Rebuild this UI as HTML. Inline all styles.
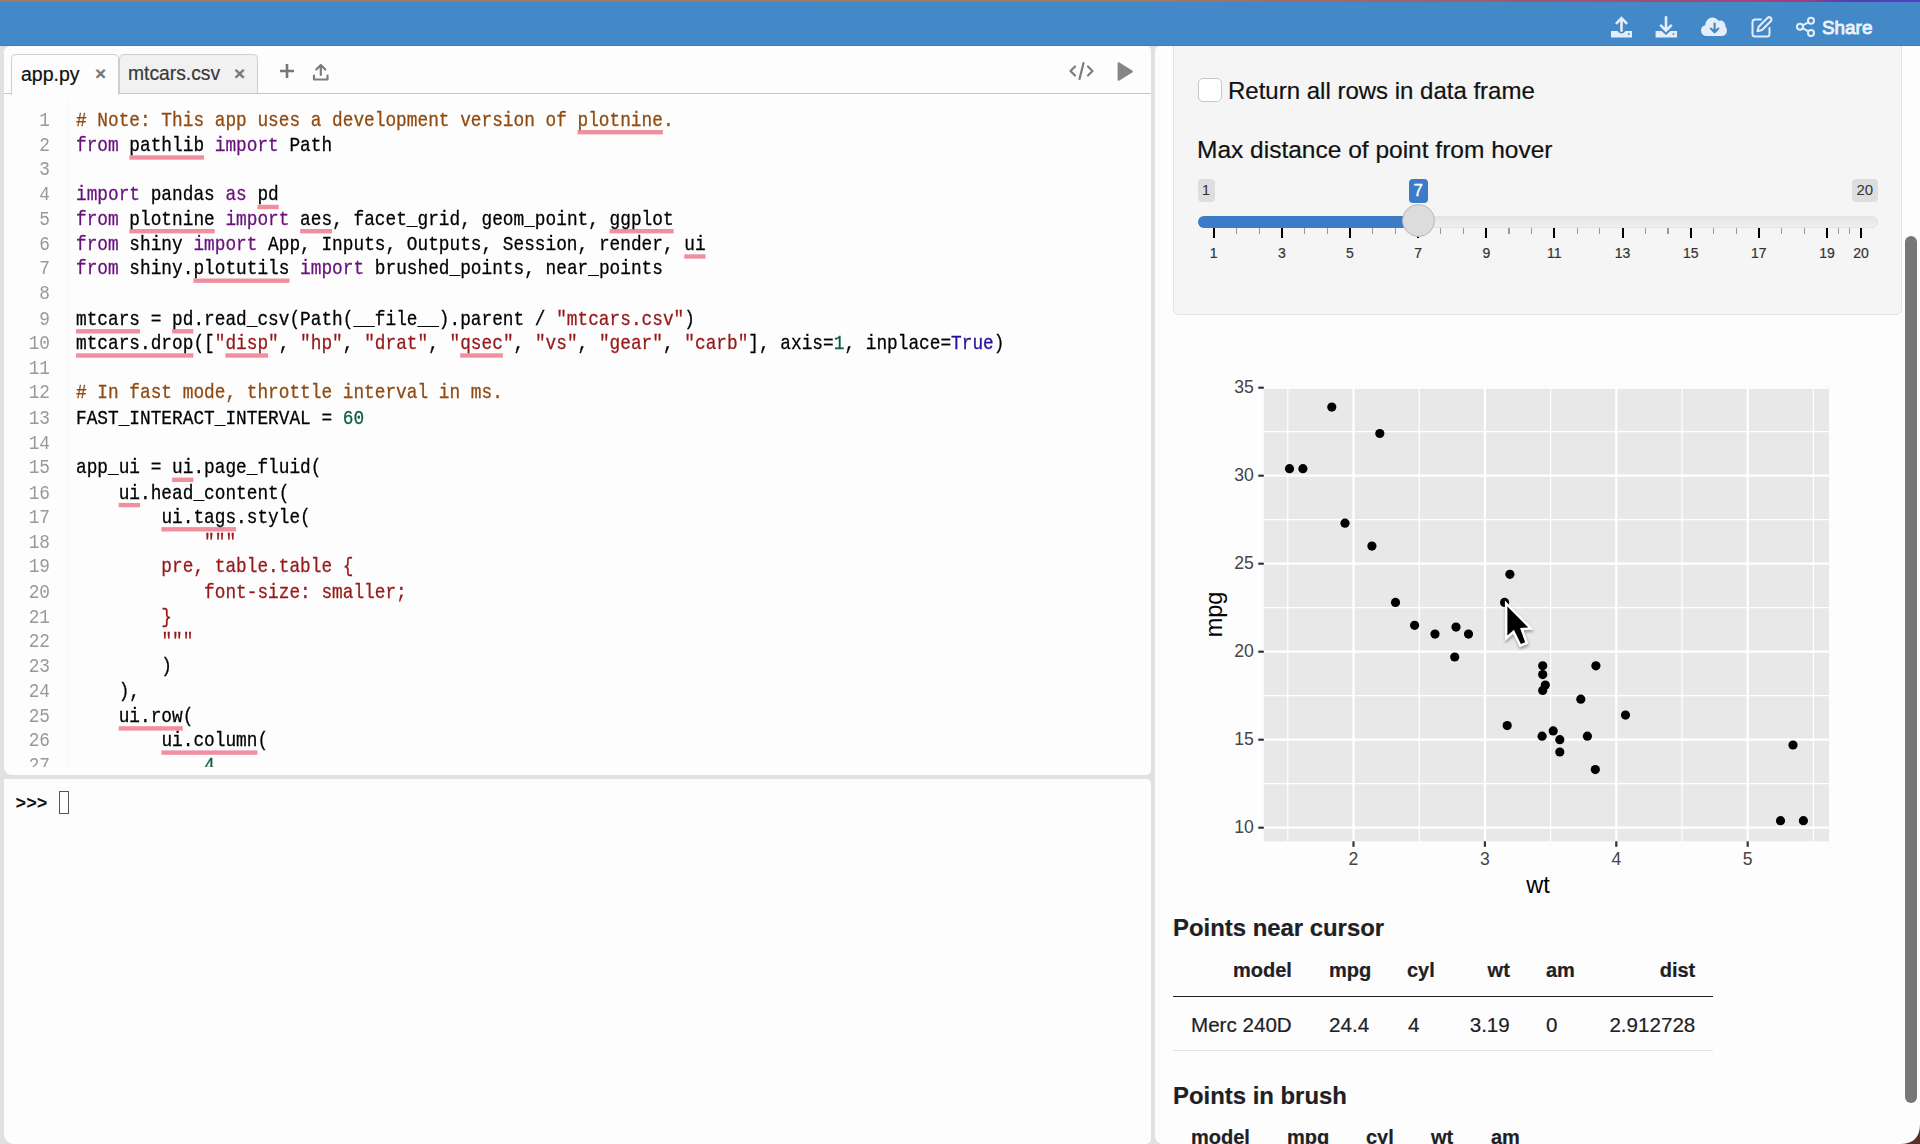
<!DOCTYPE html>
<html><head><meta charset="utf-8">
<style>
*{box-sizing:border-box}
html,body{margin:0;padding:0}
body{width:1920px;height:1144px;overflow:hidden;position:relative;background:#e1e1e1;font-family:"Liberation Sans",sans-serif;color:#212529}
.abs{position:absolute}
.tabtxt,.h4,.th,.td,.tkL,.wl{-webkit-text-stroke:0.2px currentColor}
#topline{position:absolute;left:0;top:0;width:1920px;height:2px;background:linear-gradient(90deg,#9c7a6a 0%,#a07868 60%,#a05070 85%,#a04080 94%,#5040b0 96%,#5040c0 100%)}
#header{position:absolute;left:0;top:2px;width:1920px;height:44px;background:#4388c7;border-bottom:1px solid #3f7db5}
#editor{position:absolute;left:4px;top:46px;width:1147px;height:729px;background:#fdfdfd;border-radius:6px 5px 5px 8px;overflow:hidden}
#terminal{position:absolute;left:4px;top:779px;width:1147px;height:365px;background:#fdfdfd;border-radius:0 5px 5px 10px}
#divider{position:absolute;left:1151px;top:46px;width:4px;height:1098px;background:#e1e1e1}
#right{position:absolute;left:1155px;top:46px;width:765px;height:1098px;background:#fdfdfd;overflow:hidden;border-radius:5px 0 0 8px}
.tab{position:absolute;top:8px;height:40px;border:1px solid #cfcfcf;border-bottom:none;border-radius:5px 5px 0 0}
.tabline{position:absolute;left:0;top:46.5px;width:1147px;height:1px;background:#c6c6c6}
.tabtxt{position:absolute;font-size:19.5px;white-space:pre}
.cl{height:22.582px;line-height:22.582px;white-space:pre}
#gutter{position:absolute;left:0;top:61.8px;transform:scaleY(1.1);transform-origin:0 0;width:46px;text-align:right;font-family:"Liberation Mono",monospace;font-size:17.8px;color:#999}
#code{position:absolute;left:72px;top:62.3px;transform:scaleY(1.1);transform-origin:0 0;font-family:"Liberation Mono",monospace;font-size:17.8px;color:#000;-webkit-text-stroke:0.25px currentColor}
#gline{position:absolute;left:63px;top:55px;width:1px;height:666px;background:#f5f5f5}
#codeclip{position:absolute;left:0;top:0;width:1147px;height:721px;overflow:hidden}
#well{position:absolute;left:18px;top:-10px;width:729px;height:279px;background:#f5f5f5;border:1px solid #e3e3e3;border-radius:6px}
.tkM{position:absolute;top:182px;width:2px;height:10px;background:#000}
.tkm{position:absolute;top:182px;width:1.2px;height:5.5px;background:#999}
.tkL{position:absolute;top:199px;width:40px;text-align:center;font-size:14px;color:#333}
svg text.tk{font-family:"Liberation Sans",sans-serif;font-size:17.6px;fill:#454545}
svg text.al{font-family:"Liberation Sans",sans-serif;font-size:23.5px;fill:#000}
.h4{position:absolute;font-weight:bold;font-size:23.9px;color:#1d2125;white-space:pre;margin-top:2.6px}
.th{position:absolute;font-weight:bold;font-size:20px;color:#1d2125;white-space:pre;margin-top:0.7px}
.td{position:absolute;font-size:20.6px;color:#1d2125;white-space:pre;margin-top:0.5px}
</style></head>
<body>
<div id="topline"></div>
<div id="header">
  <svg class="abs" style="left:0;top:-2px" width="1920" height="46" viewBox="0 0 1920 46">
    <g fill="#e3eefa" stroke="none">
      <!-- upload -->
      <path d="M1621.5 16.2 L1628 23 L1626.2 24.7 L1622.8 21.2 L1622.8 31 Q1621.5 33 1620.2 31 L1620.2 21.2 L1616.8 24.7 L1615 23 Z"/>
      <path d="M1611 31 L1617.5 31 Q1621.5 36 1625.5 31 L1632 31 L1632 37.5 L1611 37.5 Z"/>
      <!-- download -->
      <path d="M1664.7 16.2 L1667.3 16.2 L1667.3 27.5 L1670.8 24 L1672.7 25.8 L1666 32.5 L1659.3 25.8 L1661.2 24 L1664.7 27.5 Z"/>
      <path d="M1655.6 31 L1661.5 31 L1666 35 L1670.5 31 L1677 31 L1677 37.5 L1655.6 37.5 Z"/>
      <!-- cloud -->
      <circle cx="1706.5" cy="30.5" r="5.5"/><circle cx="1712.5" cy="24.8" r="7.2"/><circle cx="1720.3" cy="25.5" r="5.1"/><circle cx="1721.5" cy="30.5" r="5.5"/><rect x="1706.5" y="27" width="15" height="9"/>
    </g>
    <g fill="#4388c7"><circle cx="1628.8" cy="34" r="0.9"/><circle cx="1673.5" cy="34" r="0.9"/></g>
    <path d="M1714.6 23.5 L1714.6 32 M1710.9 28.6 L1714.6 32.3 L1718.3 28.6" stroke="#4a83b8" stroke-width="2.1" fill="none" stroke-linecap="round" stroke-linejoin="round"/>
    <g fill="none" stroke="#e3eefa" stroke-width="2" stroke-linecap="round" stroke-linejoin="round">
      <path d="M1761 19.5 L1755 19.5 Q1752.5 19.5 1752.5 22 L1752.5 34 Q1752.5 36.5 1755 36.5 L1767 36.5 Q1769.5 36.5 1769.5 34 L1769.5 28"/>
      <path d="M1770.5 17.5 Q1772.5 19.5 1770.5 21.5 L1762 30 L1757.5 31.2 L1758.7 26.7 L1767.2 18.2 Q1769 16.5 1770.5 17.5 Z"/>
      <circle cx="1800" cy="26.8" r="3"/><circle cx="1811" cy="20.8" r="3"/><circle cx="1811" cy="32.9" r="3"/>
      <path d="M1802.7 25.4 L1808.3 22.3 M1802.7 28.2 L1808.3 31.4"/>
    </g>
    <text x="1822" y="34" font-family="Liberation Sans" font-size="18.9" fill="#e8f3fd" stroke="#e8f3fd" stroke-width="0.9">Share</text>
  </svg>
</div>

<div id="editor">
  <div class="tab" style="left:7px;width:108px;background:#fdfdfd;height:41px;z-index:2"></div>
  <div class="tab" style="left:114.5px;width:139.5px;background:#f1f1f1"></div>
  <div class="tabline"></div>
  <div class="tabtxt" style="left:17px;top:16.5px;color:#111;z-index:3">app.py</div>
  <div class="tabtxt" style="left:91px;top:17px;color:#777;font-size:19px;font-weight:bold;z-index:3">×</div>
  <div class="tabtxt" style="left:124px;top:16.5px;color:#383838;font-size:19.3px">mtcars.csv</div>
  <div class="tabtxt" style="left:230px;top:17px;color:#777;font-size:19px;font-weight:bold">×</div>
  <svg class="abs" style="left:0;top:0" width="1147" height="46">
    <g stroke="#777" stroke-width="2.6" fill="none" stroke-linecap="butt">
      <path d="M283 32 L283 18 M276 25 L290 25"/>
    </g>
    <g stroke="#7d7d7d" stroke-width="2.2" fill="none" stroke-linecap="round" stroke-linejoin="round">
      <path d="M310 29.5 L310 33.5 L323.5 33.5 L323.5 29.5 M316.8 29 L316.8 19.5 M312.3 23.5 L316.8 19 L321.3 23.5"/>
      <path d="M1071 25 L1066.5 20.5 L1071 16 M1084 25 L1088.5 20.5 L1084 16 M1079.5 12.5 L1075.5 28.5" transform="translate(0,4.5)"/>
    </g>
    <path d="M1114.8 17.4 L1127.6 25.5 L1114.8 33.6 Z" fill="#858585" stroke="#858585" stroke-width="2.4" stroke-linejoin="round"/>
  </svg>
  <div id="codeclip"><div id="gline"></div>
    <div id="gutter"><div class='cl'>1</div>
<div class='cl'>2</div>
<div class='cl'>3</div>
<div class='cl'>4</div>
<div class='cl'>5</div>
<div class='cl'>6</div>
<div class='cl'>7</div>
<div class='cl'>8</div>
<div class='cl'>9</div>
<div class='cl'>10</div>
<div class='cl'>11</div>
<div class='cl'>12</div>
<div class='cl'>13</div>
<div class='cl'>14</div>
<div class='cl'>15</div>
<div class='cl'>16</div>
<div class='cl'>17</div>
<div class='cl'>18</div>
<div class='cl'>19</div>
<div class='cl'>20</div>
<div class='cl'>21</div>
<div class='cl'>22</div>
<div class='cl'>23</div>
<div class='cl'>24</div>
<div class='cl'>25</div>
<div class='cl'>26</div>
<div class='cl'>27</div></div>
    <div id="code"><div class='cl'><span style='color:#904a10'># Note: This app uses a development version of </span><span style='color:#904a10;text-decoration:underline;text-decoration-color:#f0909f;text-decoration-thickness:3.6px;text-underline-offset:3.6px;text-decoration-skip-ink:none'>plotnine</span><span style='color:#904a10'>.</span></div>
<div class='cl'><span style='color:#68107c'>from</span> <span style='text-decoration:underline;text-decoration-color:#f0909f;text-decoration-thickness:3.6px;text-underline-offset:3.6px;text-decoration-skip-ink:none'>pathlib</span> <span style='color:#68107c'>import</span> Path</div>
<div class='cl'>&#8203;</div>
<div class='cl'><span style='color:#68107c'>import</span> pandas <span style='color:#68107c'>as</span> <span style='text-decoration:underline;text-decoration-color:#f0909f;text-decoration-thickness:3.6px;text-underline-offset:3.6px;text-decoration-skip-ink:none'>pd</span></div>
<div class='cl'><span style='color:#68107c'>from</span> <span style='text-decoration:underline;text-decoration-color:#f0909f;text-decoration-thickness:3.6px;text-underline-offset:3.6px;text-decoration-skip-ink:none'>plotnine</span> <span style='color:#68107c'>import</span> <span style='text-decoration:underline;text-decoration-color:#f0909f;text-decoration-thickness:3.6px;text-underline-offset:3.6px;text-decoration-skip-ink:none'>aes</span>, facet_grid, geom_point, <span style='text-decoration:underline;text-decoration-color:#f0909f;text-decoration-thickness:3.6px;text-underline-offset:3.6px;text-decoration-skip-ink:none'>ggplot</span></div>
<div class='cl'><span style='color:#68107c'>from</span> shiny <span style='color:#68107c'>import</span> App, Inputs, Outputs, Session, render, <span style='text-decoration:underline;text-decoration-color:#f0909f;text-decoration-thickness:3.6px;text-underline-offset:3.6px;text-decoration-skip-ink:none'>ui</span></div>
<div class='cl'><span style='color:#68107c'>from</span> shiny.<span style='text-decoration:underline;text-decoration-color:#f0909f;text-decoration-thickness:3.6px;text-underline-offset:3.6px;text-decoration-skip-ink:none'>plotutils</span> <span style='color:#68107c'>import</span> brushed_points, near_points</div>
<div class='cl'>&#8203;</div>
<div class='cl'><span style='text-decoration:underline;text-decoration-color:#f0909f;text-decoration-thickness:3.6px;text-underline-offset:3.6px;text-decoration-skip-ink:none'>mtcars</span> = <span style='text-decoration:underline;text-decoration-color:#f0909f;text-decoration-thickness:3.6px;text-underline-offset:3.6px;text-decoration-skip-ink:none'>pd</span>.read_csv(Path(__file__).parent / <span style='color:#961818'>&quot;mtcars.csv&quot;</span>)</div>
<div class='cl'><span style='text-decoration:underline;text-decoration-color:#f0909f;text-decoration-thickness:3.6px;text-underline-offset:3.6px;text-decoration-skip-ink:none'>mtcars.drop</span>([<span style='color:#961818'>&quot;</span><span style='color:#961818;text-decoration:underline;text-decoration-color:#f0909f;text-decoration-thickness:3.6px;text-underline-offset:3.6px;text-decoration-skip-ink:none'>disp</span><span style='color:#961818'>&quot;</span>, <span style='color:#961818'>&quot;hp&quot;</span>, <span style='color:#961818'>&quot;drat&quot;</span>, <span style='color:#961818'>&quot;</span><span style='color:#961818;text-decoration:underline;text-decoration-color:#f0909f;text-decoration-thickness:3.6px;text-underline-offset:3.6px;text-decoration-skip-ink:none'>qsec</span><span style='color:#961818'>&quot;</span>, <span style='color:#961818'>&quot;vs&quot;</span>, <span style='color:#961818'>&quot;gear&quot;</span>, <span style='color:#961818'>&quot;carb&quot;</span>], axis=<span style='color:#0f5e3c'>1</span>, inplace=<span style='color:#221199'>True</span>)</div>
<div class='cl'>&#8203;</div>
<div class='cl'><span style='color:#904a10'># In fast mode, throttle interval in ms.</span></div>
<div class='cl'>FAST_INTERACT_INTERVAL = <span style='color:#0f5e3c'>60</span></div>
<div class='cl'>&#8203;</div>
<div class='cl'>app_ui = <span style='text-decoration:underline;text-decoration-color:#f0909f;text-decoration-thickness:3.6px;text-underline-offset:3.6px;text-decoration-skip-ink:none'>ui</span>.page_fluid(</div>
<div class='cl'>    <span style='text-decoration:underline;text-decoration-color:#f0909f;text-decoration-thickness:3.6px;text-underline-offset:3.6px;text-decoration-skip-ink:none'>ui</span>.head_content(</div>
<div class='cl'>        <span style='text-decoration:underline;text-decoration-color:#f0909f;text-decoration-thickness:3.6px;text-underline-offset:3.6px;text-decoration-skip-ink:none'>ui.tags</span>.style(</div>
<div class='cl'>            <span style='color:#961818'>&quot;&quot;&quot;</span></div>
<div class='cl'><span style='color:#961818'>        pre, table.table {</span></div>
<div class='cl'><span style='color:#961818'>            font-size: smaller;</span></div>
<div class='cl'><span style='color:#961818'>        }</span></div>
<div class='cl'>        <span style='color:#961818'>&quot;&quot;&quot;</span></div>
<div class='cl'>        )</div>
<div class='cl'>    ),</div>
<div class='cl'>    <span style='text-decoration:underline;text-decoration-color:#f0909f;text-decoration-thickness:3.6px;text-underline-offset:3.6px;text-decoration-skip-ink:none'>ui.row</span>(</div>
<div class='cl'>        <span style='text-decoration:underline;text-decoration-color:#f0909f;text-decoration-thickness:3.6px;text-underline-offset:3.6px;text-decoration-skip-ink:none'>ui.column</span>(</div>
<div class='cl'>            <span style='color:#0f5e3c'>4</span>,</div></div>
  </div>
</div>

<div id="terminal">
  <div class="abs" style="left:11.5px;top:13px;font-family:'Liberation Mono',monospace;font-size:17.8px;line-height:24.84px;color:#111;font-weight:bold">&gt;&gt;&gt;</div>
  <div class="abs" style="left:55px;top:12px;width:10px;height:23px;border:1.5px solid #555;background:#fff"></div>
</div>

<div id="divider"></div>

<div id="right">
  <div id="well"></div>
</div>
<div class="abs" style="left:1197.5px;top:78px;width:24px;height:23.5px;border:1px solid #c8c8c8;border-radius:5px;background:#fff"></div>
<div class="abs wl" style="left:1228px;top:77px;font-size:24px;color:#111;white-space:pre">Return all rows in data frame</div>
<div class="abs wl" style="left:1197px;top:136px;font-size:24.5px;color:#111;white-space:pre">Max distance of point from hover</div>

<svg class="abs" style="left:0;top:0;pointer-events:none" width="1920" height="1144">
<rect x='1263.8' y='386.4' width='565.3' height='455.0' fill='#e8e8e8'/>
<line x1='1287.8' x2='1287.8' y1='386.4' y2='841.3' stroke='#fff' stroke-width='1.2'/>
<line x1='1419.2' x2='1419.2' y1='386.4' y2='841.3' stroke='#fff' stroke-width='1.2'/>
<line x1='1550.6' x2='1550.6' y1='386.4' y2='841.3' stroke='#fff' stroke-width='1.2'/>
<line x1='1682.0' x2='1682.0' y1='386.4' y2='841.3' stroke='#fff' stroke-width='1.2'/>
<line x1='1813.4' x2='1813.4' y1='386.4' y2='841.3' stroke='#fff' stroke-width='1.2'/>
<line y1='783.7' y2='783.7' x1='1263.8' x2='1829.1' stroke='#fff' stroke-width='1.2'/>
<line y1='695.7' y2='695.7' x1='1263.8' x2='1829.1' stroke='#fff' stroke-width='1.2'/>
<line y1='607.7' y2='607.7' x1='1263.8' x2='1829.1' stroke='#fff' stroke-width='1.2'/>
<line y1='519.7' y2='519.7' x1='1263.8' x2='1829.1' stroke='#fff' stroke-width='1.2'/>
<line y1='431.7' y2='431.7' x1='1263.8' x2='1829.1' stroke='#fff' stroke-width='1.2'/>
<line x1='1353.5' x2='1353.5' y1='386.4' y2='841.3' stroke='#fff' stroke-width='2.2'/>
<line x1='1484.9' x2='1484.9' y1='386.4' y2='841.3' stroke='#fff' stroke-width='2.2'/>
<line x1='1616.3' x2='1616.3' y1='386.4' y2='841.3' stroke='#fff' stroke-width='2.2'/>
<line x1='1747.7' x2='1747.7' y1='386.4' y2='841.3' stroke='#fff' stroke-width='2.2'/>
<line y1='827.7' y2='827.7' x1='1263.8' x2='1829.1' stroke='#fff' stroke-width='2.2'/>
<line y1='739.7' y2='739.7' x1='1263.8' x2='1829.1' stroke='#fff' stroke-width='2.2'/>
<line y1='651.7' y2='651.7' x1='1263.8' x2='1829.1' stroke='#fff' stroke-width='2.2'/>
<line y1='563.7' y2='563.7' x1='1263.8' x2='1829.1' stroke='#fff' stroke-width='2.2'/>
<line y1='475.7' y2='475.7' x1='1263.8' x2='1829.1' stroke='#fff' stroke-width='2.2'/>
<line y1='387.7' y2='387.7' x1='1263.8' x2='1829.1' stroke='#fff' stroke-width='2.2'/>
<line x1='1258.3' x2='1263.8' y1='827.7' y2='827.7' stroke='#333' stroke-width='2.2'/>
<text x='1253.8' y='833.1' text-anchor='end' class='tk'>10</text>
<line x1='1258.3' x2='1263.8' y1='739.7' y2='739.7' stroke='#333' stroke-width='2.2'/>
<text x='1253.8' y='745.1' text-anchor='end' class='tk'>15</text>
<line x1='1258.3' x2='1263.8' y1='651.7' y2='651.7' stroke='#333' stroke-width='2.2'/>
<text x='1253.8' y='657.1' text-anchor='end' class='tk'>20</text>
<line x1='1258.3' x2='1263.8' y1='563.7' y2='563.7' stroke='#333' stroke-width='2.2'/>
<text x='1253.8' y='569.1' text-anchor='end' class='tk'>25</text>
<line x1='1258.3' x2='1263.8' y1='475.7' y2='475.7' stroke='#333' stroke-width='2.2'/>
<text x='1253.8' y='481.1' text-anchor='end' class='tk'>30</text>
<line x1='1258.3' x2='1263.8' y1='387.7' y2='387.7' stroke='#333' stroke-width='2.2'/>
<text x='1253.8' y='393.1' text-anchor='end' class='tk'>35</text>
<line x1='1353.5' x2='1353.5' y1='841.3' y2='846.8' stroke='#333' stroke-width='2.2'/>
<text x='1353.5' y='864.8' text-anchor='middle' class='tk'>2</text>
<line x1='1484.9' x2='1484.9' y1='841.3' y2='846.8' stroke='#333' stroke-width='2.2'/>
<text x='1484.9' y='864.8' text-anchor='middle' class='tk'>3</text>
<line x1='1616.3' x2='1616.3' y1='841.3' y2='846.8' stroke='#333' stroke-width='2.2'/>
<text x='1616.3' y='864.8' text-anchor='middle' class='tk'>4</text>
<line x1='1747.7' x2='1747.7' y1='841.3' y2='846.8' stroke='#333' stroke-width='2.2'/>
<text x='1747.7' y='864.8' text-anchor='middle' class='tk'>5</text>
<text x='1538' y='893' text-anchor='middle' class='al'>wt</text>
<text transform='translate(1222,614.5) rotate(-90)' text-anchor='middle' class='al'>mpg</text>
<circle cx='1435.0' cy='634.1' r='4.6' fill='#000'/>
<circle cx='1468.5' cy='634.1' r='4.6' fill='#000'/>
<circle cx='1395.5' cy='602.4' r='4.6' fill='#000'/>
<circle cx='1513.2' cy='627.1' r='4.6' fill='#000'/>
<circle cx='1542.7' cy='674.6' r='4.6' fill='#000'/>
<circle cx='1545.3' cy='685.1' r='4.6' fill='#000'/>
<circle cx='1559.8' cy='752.0' r='4.6' fill='#000'/>
<circle cx='1509.9' cy='574.3' r='4.6' fill='#000'/>
<circle cx='1504.6' cy='602.4' r='4.6' fill='#000'/>
<circle cx='1542.7' cy='665.8' r='4.6' fill='#000'/>
<circle cx='1542.7' cy='690.4' r='4.6' fill='#000'/>
<circle cx='1625.5' cy='715.1' r='4.6' fill='#000'/>
<circle cx='1580.8' cy='699.2' r='4.6' fill='#000'/>
<circle cx='1587.4' cy='736.2' r='4.6' fill='#000'/>
<circle cx='1780.5' cy='820.7' r='4.6' fill='#000'/>
<circle cx='1803.4' cy='820.7' r='4.6' fill='#000'/>
<circle cx='1793.0' cy='745.0' r='4.6' fill='#000'/>
<circle cx='1379.8' cy='433.5' r='4.6' fill='#000'/>
<circle cx='1302.9' cy='468.7' r='4.6' fill='#000'/>
<circle cx='1331.8' cy='407.1' r='4.6' fill='#000'/>
<circle cx='1414.6' cy='625.3' r='4.6' fill='#000'/>
<circle cx='1553.2' cy='730.9' r='4.6' fill='#000'/>
<circle cx='1542.1' cy='736.2' r='4.6' fill='#000'/>
<circle cx='1595.3' cy='769.6' r='4.6' fill='#000'/>
<circle cx='1595.9' cy='665.8' r='4.6' fill='#000'/>
<circle cx='1345.0' cy='523.2' r='4.6' fill='#000'/>
<circle cx='1371.9' cy='546.1' r='4.6' fill='#000'/>
<circle cx='1289.5' cy='468.7' r='4.6' fill='#000'/>
<circle cx='1507.2' cy='725.6' r='4.6' fill='#000'/>
<circle cx='1454.7' cy='657.0' r='4.6' fill='#000'/>
<circle cx='1559.8' cy='739.7' r='4.6' fill='#000'/>
<circle cx='1456.0' cy='627.1' r='4.6' fill='#000'/>
</svg>

<!-- slider (page coords) -->
<div class="abs" style="left:0;top:46px;width:1920px;height:300px">
  <div class="abs" style="left:1198px;top:169.5px;width:679.5px;height:12.5px;border-radius:7px;background:linear-gradient(#e4e4e4,#f0f0f0);border:1px solid #e2e2e2"></div>
  <div class="abs" style="left:1198px;top:169.5px;width:222px;height:12.5px;border-radius:7px 0 0 7px;background:#3b7bc8"></div>
  <div class="abs" style="left:1401.5px;top:158px;width:33px;height:33px;border-radius:50%;background:#dcdcdc;border:1px solid #b8b8b8;z-index:5"></div>
  <div class="abs" style="left:1197.5px;top:133px;width:17px;height:22.5px;border-radius:4px;background:#dedede;color:#333;font-size:15px;text-align:center;line-height:22.5px">1</div>
  <div class="abs" style="left:1409px;top:133px;width:18.5px;height:24px;border-radius:4px;background:#3b7bc8;color:#fff;font-size:17px;text-align:center;line-height:24px;-webkit-text-stroke:0.3px #fff">7</div>
  <div class="abs" style="left:1852px;top:133px;width:25.5px;height:22.5px;border-radius:4px;background:#dedede;color:#333;font-size:15px;text-align:center;line-height:22.5px">20</div>
  <div class="abs" style="left:0;top:0">
<div class='tkM' style='left:1212.7px'></div>
<div class='tkL' style='left:1193.7px'>1</div>
<div class='tkM' style='left:1280.8px'></div>
<div class='tkL' style='left:1261.8px'>3</div>
<div class='tkM' style='left:1349.0px'></div>
<div class='tkL' style='left:1330.0px'>5</div>
<div class='tkM' style='left:1417.1px'></div>
<div class='tkL' style='left:1398.1px'>7</div>
<div class='tkM' style='left:1485.3px'></div>
<div class='tkL' style='left:1466.3px'>9</div>
<div class='tkM' style='left:1553.4px'></div>
<div class='tkL' style='left:1534.4px'>11</div>
<div class='tkM' style='left:1621.5px'></div>
<div class='tkL' style='left:1602.5px'>13</div>
<div class='tkM' style='left:1689.7px'></div>
<div class='tkL' style='left:1670.7px'>15</div>
<div class='tkM' style='left:1757.8px'></div>
<div class='tkL' style='left:1738.8px'>17</div>
<div class='tkM' style='left:1826.0px'></div>
<div class='tkL' style='left:1807.0px'>19</div>
<div class='tkM' style='left:1860.0px'></div>
<div class='tkL' style='left:1841.0px'>20</div>
<div class='tkm' style='left:1235.8px'></div>
<div class='tkm' style='left:1258.5px'></div>
<div class='tkm' style='left:1304.0px'></div>
<div class='tkm' style='left:1326.7px'></div>
<div class='tkm' style='left:1372.1px'></div>
<div class='tkm' style='left:1394.8px'></div>
<div class='tkm' style='left:1440.2px'></div>
<div class='tkm' style='left:1462.9px'></div>
<div class='tkm' style='left:1508.4px'></div>
<div class='tkm' style='left:1531.1px'></div>
<div class='tkm' style='left:1576.5px'></div>
<div class='tkm' style='left:1599.2px'></div>
<div class='tkm' style='left:1644.7px'></div>
<div class='tkm' style='left:1667.4px'></div>
<div class='tkm' style='left:1712.8px'></div>
<div class='tkm' style='left:1735.5px'></div>
<div class='tkm' style='left:1780.9px'></div>
<div class='tkm' style='left:1803.6px'></div>
<div class='tkm' style='left:1837.7px'></div>
<div class='tkm' style='left:1849.1px'></div>
  </div>
</div>

<!-- tables -->
<div class="h4" style="left:1173px;top:911px">Points near cursor</div>
<div class="th" style="left:1233px;top:958px">model</div>
<div class="th" style="left:1329px;top:958px">mpg</div>
<div class="th" style="left:1407px;top:958px">cyl</div>
<div class="th" style="left:1487.6px;top:958px">wt</div>
<div class="th" style="left:1546px;top:958px">am</div>
<div class="th" style="left:1659.7px;top:958px">dist</div>
<div class="abs" style="left:1173px;top:995.5px;width:540px;height:1px;background:#222"></div>
<div class="td" style="left:1191px;top:1012px">Merc 240D</div>
<div class="td" style="left:1329px;top:1012px">24.4</div>
<div class="td" style="left:1408px;top:1012px">4</div>
<div class="td" style="left:1469.7px;top:1012px">3.19</div>
<div class="td" style="left:1546px;top:1012px">0</div>
<div class="td" style="left:1609.4px;top:1012px">2.912728</div>
<div class="abs" style="left:1173px;top:1049.5px;width:540px;height:1px;background:#e2e2e2"></div>
<div class="h4" style="left:1173px;top:1079px">Points in brush</div>
<div class="th" style="left:1191px;top:1125px">model</div>
<div class="th" style="left:1287px;top:1125px">mpg</div>
<div class="th" style="left:1366px;top:1125px">cyl</div>
<div class="th" style="left:1431px;top:1125px">wt</div>
<div class="th" style="left:1491px;top:1125px">am</div>

<!-- scrollbar -->
<div class="abs" style="left:1905px;top:236px;width:11.5px;height:867px;border-radius:6px;background:#777"></div>

<!-- cursor -->
<svg class="abs" style="left:1490px;top:590px" width="60" height="70" viewBox="1490 590 60 70">
  <defs><filter id="sh" x="-30%" y="-30%" width="160%" height="160%"><feGaussianBlur stdDeviation="1.6"/></filter></defs>
  <path d="M1507.4 606.5 L1507.4 635.6 L1513.9 629.8 L1520.9 644.1 L1525.2 642.3 L1520 627.9 L1528.2 627.4 Z" fill="#000" opacity="0.35" stroke="#000" stroke-width="5" stroke-linejoin="miter" transform="translate(0.5,2)" filter="url(#sh)"/>
  <path d="M1507.4 606.5 L1507.4 635.6 L1513.9 629.8 L1520.9 644.1 L1525.2 642.3 L1520 627.9 L1528.2 627.4 Z" fill="#fff" stroke="#fff" stroke-width="5" stroke-linejoin="miter"/>
  <path d="M1507.4 606.5 L1507.4 635.6 L1513.9 629.8 L1520.9 644.1 L1525.2 642.3 L1520 627.9 L1528.2 627.4 Z" fill="#000"/>
</svg>

<!-- bottom right window corner -->
<svg class="abs" style="left:1900px;top:1124px" width="20" height="20"><path d="M20 0 L20 20 L0 20 Q20 20 20 0 Z" fill="#553025"/></svg>
</body></html>
